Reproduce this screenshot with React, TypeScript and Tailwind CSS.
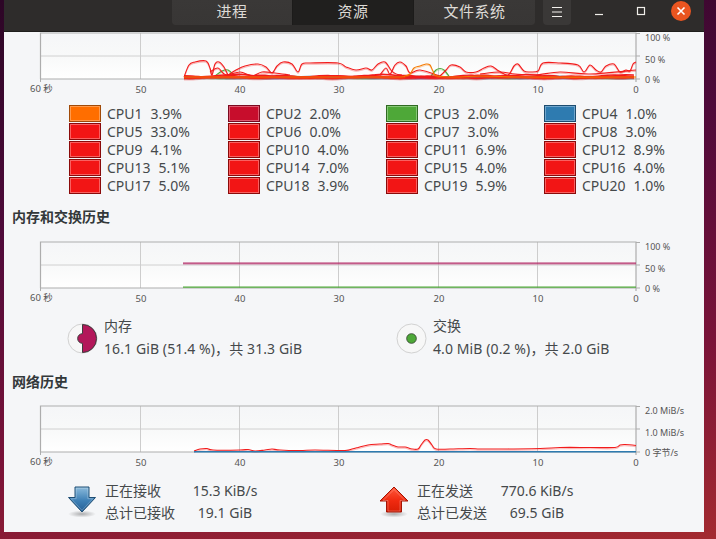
const FONT = "[font-family:'Noto_Sans','Noto_Sans_CJK_SC',sans-serif]";

type Pt = [number, number];

// catmull-rom through the points, good enough for the little history curves
function smooth(pts: Pt[]) {
  let d = `M${pts[0][0]} ${pts[0][1]}`;
  for (let i = 0; i < pts.length - 1; i++) {
    const p0 = pts[i - 1] ?? pts[i];
    const p1 = pts[i];
    const p2 = pts[i + 1];
    const p3 = pts[i + 2] ?? p2;
    const c1x = p1[0] + (p2[0] - p0[0]) / 6;
    const c1y = p1[1] + (p2[1] - p0[1]) / 6;
    const c2x = p2[0] - (p3[0] - p1[0]) / 6;
    const c2y = p2[1] - (p3[1] - p1[1]) / 6;
    d += `C${c1x.toFixed(1)} ${c1y.toFixed(1)} ${c2x.toFixed(1)} ${c2y.toFixed(1)} ${p2[0]} ${p2[1]}`;
  }
  return d;
}

function Curve({ pts, color, width = 1.1 }: { pts: Pt[]; color: string; width?: number }) {
  const d = smooth(pts);
  return (
    <g fill="none" strokeLinejoin="round">
      <path d={d} stroke={color} strokeOpacity={0.3} strokeWidth={width} transform="translate(0 1.2)" />
      <path d={d} stroke={color} strokeWidth={width} />
    </g>
  );
}

// low wobbling series along the bottom of the cpu chart
function band(seed: number, base: number, amp: number): Pt[] {
  const out: Pt[] = [];
  for (let x = 184; x <= 636; x += 9) {
    const w = Math.sin(x * 0.13 + seed) + Math.sin(x * 0.047 + seed * 2.3);
    out.push([x, +(base + w * amp).toFixed(1)]);
  }
  return out;
}

const cpuPeaks: Pt[][] = [
  [[184, 77], [189, 65], [195, 62], [206, 61], [210, 68], [212, 75], [215, 64], [219, 62], [224, 67], [228, 75]],
  [[228, 75], [236, 70], [245, 66], [258, 64], [266, 67], [272, 73], [277, 66], [283, 62], [292, 64], [298, 72], [302, 64], [310, 63], [338, 63], [346, 67], [356, 70], [366, 68], [372, 70], [378, 64], [385, 62], [391, 70], [396, 74], [402, 75]],
  [[380, 75], [386, 68], [390, 74], [395, 65], [400, 62], [406, 66], [410, 73], [420, 70], [440, 76]],
  [[440, 76], [446, 70], [451, 65], [460, 67], [466, 72], [476, 72], [484, 68], [491, 66], [499, 71], [508, 75], [514, 66], [518, 64], [524, 71], [530, 72], [538, 71], [543, 63], [560, 63], [578, 65], [584, 72], [590, 65], [596, 70], [601, 72], [606, 66], [614, 64], [620, 72], [626, 70], [630, 71], [633, 64], [636, 62]],
  [[210, 72], [218, 68], [226, 75], [240, 72], [252, 76], [262, 72], [275, 73], [290, 75]],
  [[480, 74], [500, 72], [515, 74], [535, 75], [560, 72], [590, 74], [636, 70]],
];

function CpuCurves() {
  return (
    <>
      <Curve pts={[[215, 76], [222, 71], [228, 70], [234, 75]]} color="#4ea838" />
      <Curve pts={[[431, 76], [436, 70], [440, 68.5], [444, 70], [449, 76]]} color="#4ea838" />
      <Curve pts={band(4.1, 77.3, 0.5)} color="#4ea838" />
      <Curve pts={band(1.7, 77, 0.5)} color="#2e7bb0" />
      <Curve pts={band(3.3, 77.5, 0.4)} color="#7d3c98" />
      {cpuPeaks.map((p, i) => (
        <Curve key={i} pts={p} color="#f21b1b" />
      ))}
      <Curve pts={band(0.4, 76.5, 0.8)} color="#f21b1b" width={1.4} />
      <Curve pts={band(2.2, 77, 0.9)} color="#f21b1b" width={1.4} />
      <Curve pts={band(5.2, 76.2, 1)} color="#f21b1b" width={1.4} />
      <Curve pts={band(6.1, 77.3, 0.6)} color="#f21b1b" width={1.4} />
      <Curve
        pts={[[184, 77], [250, 77], [320, 77], [395, 77], [405, 76], [410, 74], [414, 68], [420, 66], [426, 64], [430, 65], [433, 71], [437, 76], [460, 77], [480, 76], [520, 77], [636, 77]]}
        color="#f57900"
      />
    </>
  );
}

const memCurves = (
  <>
    <path d="M183 263.8H636" stroke="#b5306b" strokeOpacity={0.3} strokeWidth={1.5} />
    <path d="M183 262.7H636" stroke="#b5306b" strokeWidth={1.2} />
    <path d="M183 286.6H636" stroke="#4ea838" strokeWidth={1.2} />
  </>
);

const netCurves = (
  <>
    <Curve
      pts={[[194, 451], [200, 449], [207, 448.5], [213, 450], [240, 450], [248, 449.5], [255, 451], [265, 450], [272, 449], [280, 450], [300, 450.5], [315, 450], [345, 450.5], [352, 449], [358, 447.5], [368, 445], [380, 444], [388, 443.5], [392, 445], [398, 447], [405, 447], [412, 449], [418, 449], [421, 445], [425, 440], [428, 440], [432, 445], [436, 449], [450, 449], [470, 448.5], [480, 449], [500, 449], [540, 448.5], [560, 447.5], [590, 447.5], [615, 447.5], [620, 445], [625, 444.5], [636, 445.5]]}
      color="#f21b1b"
    />
    <path d="M194 451.8H636" stroke="#2e7bb0" strokeWidth={1.4} fill="none" />
  </>
);

function Chart({
  top,
  yLabels,
  gradId,
  children,
}: {
  top: number;
  yLabels: string[];
  gradId: string;
  children: React.ReactNode;
}) {
  const h = 46;
  const mid = top + h / 2;
  const bot = top + h;
  const xs = [140.5, 239.5, 338.5, 438.5, 537.5];
  const labels = [
    ["50", 141],
    ["40", 240],
    ["30", 339],
    ["20", 439],
    ["10", 538],
    ["0", 636],
  ] as const;
  return (
    <svg width={700} height={66} viewBox={`4 ${top - 1} 700 66`} className={`block ${FONT}`}>
      <defs>
        <linearGradient id={gradId} x1="0" y1="0" x2="0" y2="1">
          <stop offset="0" stopColor="#f5f6f8" />
          <stop offset="0.5" stopColor="#f8f9f9" />
          <stop offset="1" stopColor="#ffffff" />
        </linearGradient>
      </defs>
      <rect x={41} y={top} width={595} height={h} fill={`url(#${gradId})`} />
      <path d={`M41 ${mid}H636`} stroke="#d0d0d0" strokeWidth={1} />
      {xs.map((x) => (
        <path key={x} d={`M${x} ${top}V${bot}`} stroke="#cdcdcd" strokeWidth={1} />
      ))}
      <path d={`M40.5 ${bot}V${top}H636V${bot + 3}M40 ${bot}H636`} fill="none" stroke="#adadad" strokeWidth={1.2} />
      <path d={`M40.5 ${bot}v3`} stroke="#adadad" strokeWidth={1} />
      <path d={`M636 ${top + 0.5}h4M636 ${mid}h4M636 ${bot}h4`} stroke="#adadad" strokeWidth={1} />
      {children}
      <text x={30} y={bot + 13} fontSize={9.5} fill="#555">
        60 秒
      </text>
      {labels.map(([t, x]) => (
        <text key={t} x={x} y={bot + 14} fontSize={9.5} fill="#555" textAnchor="middle">
          {t}
        </text>
      ))}
      {yLabels.map((t, i) => (
        <text key={t} x={645} y={top + [8, 29.5, 49.5][i]} fontSize={9} fill="#555">
          {t}
        </text>
      ))}
    </svg>
  );
}

const cpus = [
  ["CPU1", "3.9%", "bg-[#ff6e00] border-[#a04a08]", "border-[#ff9a4d]"],
  ["CPU2", "2.0%", "bg-[#c70d2c] border-[#7a0a20]", "border-[#dd5a70]"],
  ["CPU3", "2.0%", "bg-[#4ea838] border-[#2f6a22]", "border-[#86c676]"],
  ["CPU4", "1.0%", "bg-[#2e7bb0] border-[#1c4c70]", "border-[#6fa5cc]"],
  ["CPU5", "33.0%"],
  ["CPU6", "0.0%"],
  ["CPU7", "3.0%"],
  ["CPU8", "3.0%"],
  ["CPU9", "4.1%"],
  ["CPU10", "4.0%"],
  ["CPU11", "6.9%"],
  ["CPU12", "8.9%"],
  ["CPU13", "5.1%"],
  ["CPU14", "7.0%"],
  ["CPU15", "4.0%"],
  ["CPU16", "4.0%"],
  ["CPU17", "5.0%"],
  ["CPU18", "3.9%"],
  ["CPU19", "5.9%"],
  ["CPU20", "1.0%"],
];

function MemPie() {
  return (
    <svg width={31} height={31} viewBox="0 0 32 32" className="shrink-0">
      <circle cx="16" cy="16" r="15" fill="#f7f7f7" stroke="#cfcfcf" />
      <path
        d="M16 1.500A14.500 14.500 0 0 1 16 30.500V21A5 5 0 0 1 16 11Z"
        fill="#b3175a"
        stroke="#3a3a3a"
        strokeWidth={1}
      />
    </svg>
  );
}

function SwapPie() {
  return (
    <svg width={31} height={31} viewBox="0 0 32 32" className="shrink-0">
      <circle cx="16" cy="16" r="15" fill="#f7f7f7" stroke="#cfcfcf" />
      <circle cx="16" cy="16" r="5" fill="#4ea838" stroke="#2f3b2b" strokeWidth={0.8} />
    </svg>
  );
}

function NetArrow({ up }: { up?: boolean }) {
  const id = up ? "arrowUp" : "arrowDown";
  return (
    <svg width={30} height={32} viewBox="0 0 30 32" className="shrink-0">
      <defs>
        <linearGradient id={id} x1="0" y1="0" x2="0" y2="1">
          <stop offset="0" stopColor={up ? "#ff5a3c" : "#8cbbdc"} />
          <stop offset="0.55" stopColor={up ? "#f02a10" : "#3d7fb5"} />
          <stop offset="1" stopColor={up ? "#d81e05" : "#245f96"} />
        </linearGradient>
        <radialGradient id={`${id}s`}>
          <stop offset="0" stopColor="#000" stopOpacity={0.3} />
          <stop offset="1" stopColor="#000" stopOpacity={0} />
        </radialGradient>
      </defs>
      <ellipse cx="15" cy="28" rx="14" ry="3.5" fill={`url(#${id}s)`} />
      <path
        d={up ? "M15 1L29 15H22.500V26H7.500V15H1Z" : "M8 1H22V11.500H28.500L15 26L1.500 11.500H8Z"}
        fill={`url(#${id})`}
        stroke={up ? "#a31404" : "#1f4e74"}
        strokeWidth={1}
        strokeLinejoin="round"
      />
      <path
        d={up ? "M15 3.500L26 14.500H21V25H9V14.500H4Z" : "M9.200 2.200H20.800V12.700H25.800L15 24.300L4.200 12.700H9.200Z"}
        fill="none"
        stroke="#ffffff"
        strokeOpacity={0.3}
        strokeWidth={0.8}
      />
    </svg>
  );
}

function Tab({ label, active, className }: { label: string; active?: boolean; className?: string }) {
  return (
    <div
      className={`flex h-[25px] w-[121px] items-center justify-center border-r border-[#1c1b1a] pb-[2px] text-[15px] tracking-[0.5px] text-[#dedbd6] ${
        active ? "bg-[#201f1e]" : "bg-gradient-to-b from-[#3a3837] to-[#383635]"
      } ${className ?? ""}`}
    >
      {label}
    </div>
  );
}

export default function App() {
  return (
    <div
      className={`h-[539px] w-[716px] overflow-hidden bg-[linear-gradient(170deg,#2c0626_0%,#4f0a3a_35%,#7a1338_70%,#a32a30_100%)] pl-1 ${FONT}`}
    >
      <div className="flex h-[532px] w-[700px] flex-col bg-[#f5f6f8]">
        {/* header bar */}
        <div className="flex h-[32px] shrink-0 items-start border-b border-[#1f1e1d] bg-[#2e2c2b] pl-[168px]">
          <Tab label="进程" className="rounded-bl-[4px]" />
          <Tab label="资源" active />
          <Tab label="文件系统" className="rounded-br-[4px] border-r-0" />
          <div className="ml-2 flex h-[25px] w-[28px] items-center justify-center rounded-b-[4px] bg-[#3a3837] pb-[2px]">
            <svg width="12" height="10" viewBox="0 0 12 10" stroke="#f4f2ee" strokeWidth="1">
              <path d="M1 .5H11M1 5H11M1 9.500H11" />
            </svg>
          </div>
          <div className="ml-[23px] flex h-[22px] items-center">
            <svg width="10" height="10" viewBox="0 0 10 10" stroke="#f0eeea" strokeWidth="1.2">
              <path d="M1 8.500H9" />
            </svg>
          </div>
          <div className="ml-[32px] flex h-[22px] items-center">
            <svg width="10" height="10" viewBox="0 0 10 10" stroke="#f0eeea" strokeWidth="1.2" fill="none">
              <rect x="1.500" y="1.500" width="7" height="7" />
            </svg>
          </div>
          <div className="ml-[25px] mt-px flex h-[20px] w-[20px] items-center justify-center rounded-full bg-[#ea5520]">
            <svg width="10" height="10" viewBox="0 0 10 10" stroke="#ffffff" strokeWidth="1.6">
              <path d="M1.500 1.500L8.500 8.500M8.500 1.500L1.500 8.500" />
            </svg>
          </div>
        </div>

        {/* cpu */}
        <Chart top={33} yLabels={["100 %", "50 %", "0 %"]} gradId="g1">
          <CpuCurves />
        </Chart>
        <div className="mt-[7px] grid grid-cols-[159px_158px_158px_1fr] gap-y-px pl-[65px] text-[14px] leading-[17px] text-[#45494b]">
          {cpus.map(([name, val, box, inner]) => (
            <div key={name} className="flex h-[17px] items-center">
              <div className={`h-[17px] w-[32px] border ${box ?? "border-[#8a0a0a] bg-[#f21515]"}`}>
                <div className={`h-full w-full border ${inner ?? "border-[#f96060]"}`} />
              </div>
              <span className="ml-[6px]">{name}</span>
              <span className="ml-[8px]">{val}</span>
            </div>
          ))}
        </div>

        {/* memory */}
        <h2 className="mt-[13px] pl-2 text-[14px] font-bold leading-[20px] text-[#33383a]">内存和交换历史</h2>
        <div className="mt-[14px]">
          <Chart top={241.5} yLabels={["100 %", "50 %", "0 %"]} gradId="g2">
            {memCurves}
          </Chart>
        </div>
        <div className="mt-[8px] flex text-[14px] text-[#45494b]">
          <div className="flex w-[329px] items-center pl-[63px]">
            <MemPie />
            <div className="ml-[6px]">
              <div className="leading-[22px]">内存</div>
              <div className="leading-[24px] tracking-[0.1px]">16.1 GiB (51.4 %)，共 31.3 GiB</div>
            </div>
          </div>
          <div className="flex items-center pl-[63px]">
            <SwapPie />
            <div className="ml-[6px]">
              <div className="leading-[22px]">交换</div>
              <div className="leading-[24px] tracking-[0.1px]">4.0 MiB (0.2 %)，共 2.0 GiB</div>
            </div>
          </div>
        </div>

        {/* network */}
        <h2 className="mt-[11px] pl-2 text-[14px] font-bold leading-[20px] text-[#33383a]">网络历史</h2>
        <div className="mt-[13px]">
          <Chart top={406} yLabels={["2.0 MiB/s", "1.0 MiB/s", "0 字节/s"]} gradId="g3">
            {netCurves}
          </Chart>
        </div>
        <div className="mt-[9px] flex text-[14px] text-[#45494b]">
          <div className="flex w-[312px] items-center pl-[63px]">
            <NetArrow />
            <div className="ml-[8px] grid grid-cols-[auto_80px] gap-x-[10px] leading-[22px]">
              <span>正在接收</span>
              <span className="col-start-2 row-start-1 text-center">15.3 KiB/s</span>
              <span>总计已接收</span>
              <span className="text-center">19.1 GiB</span>
            </div>
          </div>
          <div className="flex items-center pl-[63px]">
            <NetArrow up />
            <div className="ml-[8px] grid grid-cols-[auto_90px] gap-x-[5px] leading-[22px]">
              <span>正在发送</span>
              <span className="col-start-2 row-start-1 text-center">770.6 KiB/s</span>
              <span>总计已发送</span>
              <span className="text-center">69.5 GiB</span>
            </div>
          </div>
        </div>
      </div>
    </div>
  );
}
